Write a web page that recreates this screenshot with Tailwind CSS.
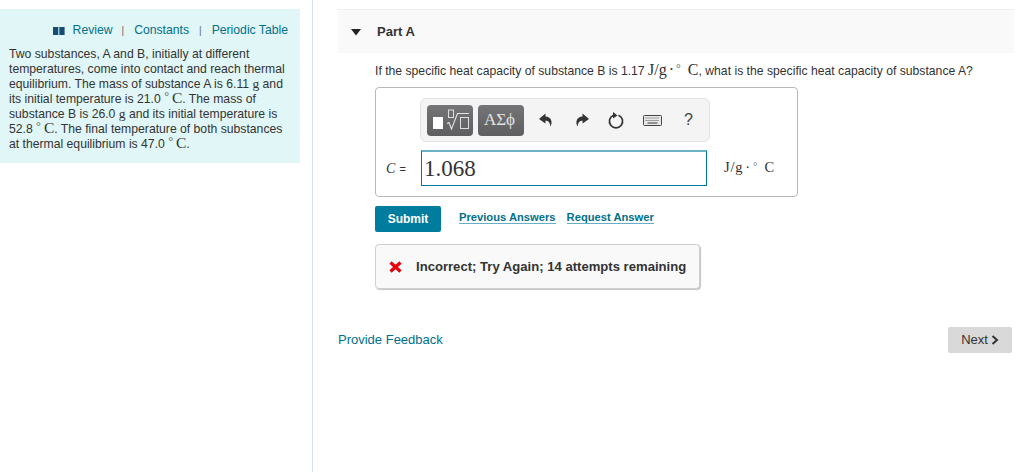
<!DOCTYPE html>
<html>
<head>
<meta charset="utf-8">
<script src="https://cdn.jsdelivr.net/npm/@tailwindcss/browser@4"></script>
</head>
<body class="bg-white">
<div class="flex h-[472px] w-[1024px] overflow-hidden font-['Liberation_Sans',Arial,sans-serif] text-[#333]">
  <aside class="w-[313px] h-full shrink-0 border-r border-r-[#d6e3ef] pt-[9px]">
    <div class="w-[300px] h-[154px] bg-[#e1f6f6] pl-[9px] pr-[12px] pt-[14px]">
      <div class="flex items-center justify-end h-[15px] text-[12.2px] text-[#00708c]">
        <svg width="12" height="8" viewBox="0 0 12 8" class="mr-[8px]"><rect x="0" y="0" width="5.3" height="8" fill="#134f72"/><rect x="6.3" y="0" width="5.3" height="8" fill="#134f72"/></svg>
        <span>Review</span><span class="ml-[9px] mr-[10px] text-[#666] text-[10px]">|</span><span>Constants</span><span class="mx-[10px] text-[#666] text-[10px]">|</span><span>Periodic Table</span>
      </div>
      <p class="mt-[9px] text-[12.2px] leading-[15px] text-[#333] whitespace-nowrap">Two substances, A and B, initially at different<br>temperatures, come into contact and reach thermal<br>equilibrium. The mass of substance A is 6.11 <span class="font-['Liberation_Serif',serif] text-[13.5px] leading-[0]">g</span> and<br>its initial temperature is 21.0 <span class="font-['Liberation_Serif',serif] text-[15.5px] leading-[0]"><sup class="text-[12px] top-[-3px] mr-[3px] text-[#666]">°</sup>C</span>. The mass of<br>substance B is 26.0 <span class="font-['Liberation_Serif',serif] text-[13.5px] leading-[0]">g</span> and its initial temperature is<br>52.8 <span class="font-['Liberation_Serif',serif] text-[15.5px] leading-[0]"><sup class="text-[12px] top-[-3px] mr-[3px] text-[#666]">°</sup>C</span>. The final temperature of both substances<br>at thermal equilibrium is 47.0 <span class="font-['Liberation_Serif',serif] text-[15.5px] leading-[0]"><sup class="text-[12px] top-[-3px] mr-[3px] text-[#666]">°</sup>C</span>.</p>
    </div>
  </aside>
  <main class="flex-1 pl-[25px] pr-[10px] pt-[9px] min-w-0">
    <div class="flex items-center h-[44px] pt-[1px] bg-[#f9f9f9] border-t border-t-[#eee]">
      <svg width="10" height="7" viewBox="0 0 10 7" class="ml-[13px]"><path d="M0 0H10L5 6.5Z" fill="#222"/></svg>
      <span class="ml-[16px] text-[13px] font-bold text-[#333]">Part A</span>
    </div>
    <div class="pl-[37px]">
      <p class="mt-[9px] h-[18px] text-[12.2px] leading-[18px] text-[#333] whitespace-nowrap">If the specific heat capacity of substance B is 1.17 <span class="font-['Liberation_Serif',serif] text-[16px] leading-[0]">J/g<span class="mx-[2px]">·</span><sup class="text-[12px] top-[-3px] mr-[3px] text-[#666]">°</sup> C</span>, what is the specific heat capacity of substance A?</p>
      <div class="mt-[7px] w-[423px] h-[110px] rounded-[4px] border border-[#b9b9b9] bg-white">
        <div class="ml-[44px] mt-[10px] w-[290px] h-[44px] rounded-[6px] border border-[#e2e2e2] bg-[#f4f4f4] flex items-center pl-[6px]">
          <div class="w-[46px] h-[31px] rounded-[4px] bg-gradient-to-b from-[#757578] to-[#5e5e61] flex items-center justify-center">
            <svg width="40" height="26" viewBox="0 0 40 26" fill="none">
              <rect x="3" y="10" width="10" height="12" fill="#fff"/>
              <rect x="18.5" y="3" width="5" height="7.5" stroke="#ddd" stroke-width="1"/>
              <path d="M17 16.5L19 15.5L21.5 22L27.5 6.5H39" stroke="#e4e4e4" stroke-width="1.1"/>
              <rect x="30.5" y="10.5" width="8" height="11" stroke="#ddd" stroke-width="1"/>
            </svg>
          </div>
          <div class="ml-[5px] w-[46px] h-[31px] rounded-[4px] bg-gradient-to-b from-[#757578] to-[#5e5e61] flex items-center justify-center pr-[3px] font-['Liberation_Serif',serif] text-[17px] text-[#e4e4e4]">ΑΣϕ</div>
          <svg width="16" height="16" viewBox="0 0 16 16" class="ml-[14px]"><path d="M7.5 1.5L1 7L7.5 11.5V8.5C10.5 8.5 12 10.5 12.5 14.5C15 9.5 13 5 7.5 4.5Z" fill="#333"/></svg>
          <svg width="16" height="16" viewBox="0 0 16 16" class="ml-[20px]"><path d="M8.5 1.5L15 7L8.5 11.5V8.5C5.5 8.5 4 10.5 3.5 14.5C1 9.5 3 5 8.5 4.5Z" fill="#333"/></svg>
          <svg width="18" height="18" viewBox="0 0 18 18" fill="none" class="ml-[17px]"><path d="M11.5 4.2A6.6 6.6 0 1 1 6.5 4.2" stroke="#333" stroke-width="1.7"/><path d="M6 1L10.5 4.4L6 7.5Z" fill="#333"/></svg>
          <svg width="19" height="11" viewBox="0 0 19 11" fill="none" class="ml-[18px]"><rect x="0.5" y="0.5" width="18" height="10" rx="1" fill="#e8e8e8" stroke="#444"/><path d="M2.5 3H16.5M2.5 5.5H16.5" stroke="#555" stroke-width="1.2" stroke-dasharray="1 1"/><path d="M4.5 8H14.5" stroke="#555" stroke-width="1.2"/></svg>
          <span class="ml-[22px] text-[16px] text-[#444]">?</span>
        </div>
        <div class="flex items-center mt-[8px]">
          <span class="ml-[10px] w-[35px] text-[11px] text-[#333] whitespace-nowrap"><i class="font-['Liberation_Serif',serif] text-[14px]">C</i> <span class="ml-[1px]">=</span></span>
          <div class="w-[286px] h-[36px] border border-[#00799e] border-t-[#6db3c8] border-t-2 flex items-center pl-[2px] pt-[1px] font-['Liberation_Serif',serif] text-[23px] text-[#333]">1.068</div>
          <span class="ml-[17px] font-['Liberation_Serif',serif] text-[14.5px] tracking-[0.8px] text-[#333] whitespace-nowrap">J/g<span class="mx-[2px]">·</span><sup class="text-[11px] top-[-2px] mr-[2px] text-[#666]">°</sup> C</span>
        </div>
      </div>
      <div class="mt-[9px] flex items-center h-[26px]">
        <button class="w-[66px] h-[26px] rounded-[2px] bg-[#007c9e] text-white text-[12px] font-bold">Submit</button>
        <a class="ml-[18px] mb-[4px] text-[11.2px] font-bold text-[#00708c] border-b border-b-[#66afc5] leading-[12px]">Previous Answers</a>
        <a class="ml-[11px] mb-[4px] text-[11.2px] font-bold text-[#00708c] border-b border-b-[#66afc5] leading-[12px]">Request Answer</a>
      </div>
      <div class="mt-[12px] w-[325px] h-[45px] rounded-[4px] border border-[#cfcfcf] bg-[#f9f9f9] shadow-[1px_1px_1px_#c4c4c4] flex items-center pl-[13px] pt-[1px]">
        <svg width="13" height="12" viewBox="0 0 13 12"><path d="M1.5 1.5L11.5 10.5M11.5 1.5L1.5 10.5" stroke="#e8000b" stroke-width="3.2"/></svg>
        <span class="ml-[14px] text-[13.1px] font-bold text-[#333] whitespace-nowrap">Incorrect; Try Again; 14 attempts remaining</span>
      </div>
    </div>
    <div class="mt-[38px] flex items-center justify-between h-[26px]">
      <a class="text-[13px] text-[#00708c]">Provide Feedback</a>
      <div class="w-[64px] h-[26px] mr-[2px] rounded-[2px] bg-[#d9d9d9] flex items-center justify-center text-[13px] text-[#333]">Next<svg width="8" height="10" viewBox="0 0 8 10" fill="none" class="ml-[3px]"><path d="M1.5 1L6 5L1.5 9" stroke="#333" stroke-width="2"/></svg></div>
    </div>
  </main>
</div>
</body>
</html>
